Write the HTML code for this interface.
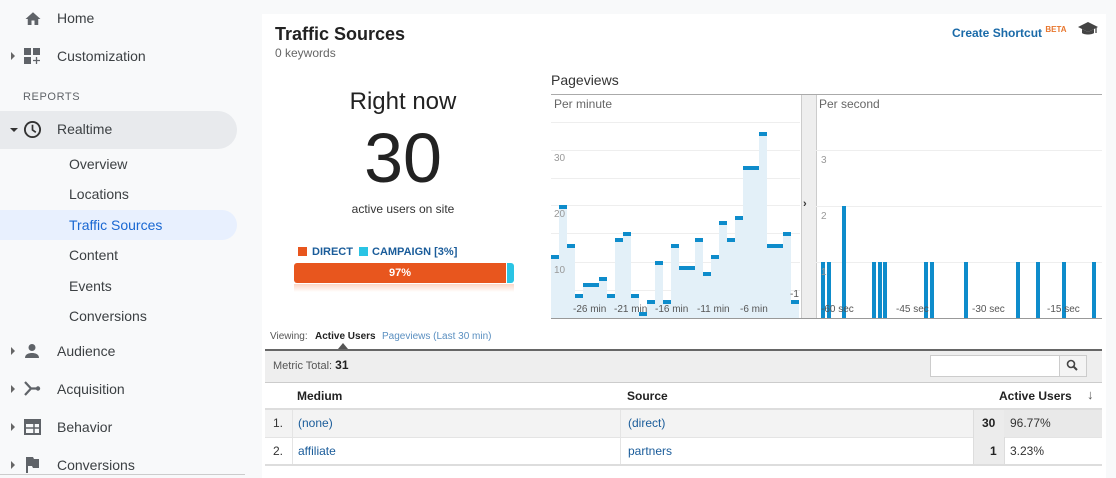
<!DOCTYPE html>
<html><head><meta charset="utf-8"><style>
body{margin:0;width:1116px;height:478px;overflow:hidden;background:#f8f9fa;font-family:"Liberation Sans",sans-serif;position:relative}
.a{position:absolute;white-space:nowrap}
.nav{font-size:14px;color:#3c4043}
.sub{font-size:14px;color:#3c4043;left:69px}
.tri{position:absolute;width:0;height:0;border-top:4px solid transparent;border-bottom:4px solid transparent;border-left:4px solid #666;left:11px}
svg{position:absolute}
</style></head><body>
<!-- sidebar -->
<svg style="left:24px;top:10px" width="18" height="18" viewBox="0 0 24 24"><path d="M10 20v-6h4v6h5v-8h3L12 3 2 12h3v8z" fill="#5f6368"/></svg>
<div class="a nav" style="left:57px;top:10px">Home</div>
<div class="tri" style="top:52px"></div>
<svg style="left:24px;top:48px" width="17" height="17" viewBox="0 0 17 17"><rect x="0" y="0" width="7" height="7" fill="#5f6368"/><rect x="9" y="0" width="7" height="7" fill="#5f6368"/><rect x="0" y="9" width="7" height="7" fill="#5f6368"/><path d="M12.5 9v7M9 12.5h7" stroke="#5f6368" stroke-width="1.3"/></svg>
<div class="a nav" style="left:57px;top:48px">Customization</div>
<div class="a" style="left:23px;top:91px;font-size:11px;letter-spacing:.6px;color:#5f6368">REPORTS</div>
<div class="a" style="left:0;top:111px;width:237px;height:38px;background:#e8eaed;border-radius:0 19px 19px 0"></div>
<div class="a" style="left:10px;top:128px;width:0;height:0;border-left:4px solid transparent;border-right:4px solid transparent;border-top:4px solid #333"></div>
<svg style="left:23px;top:120px" width="19" height="19" viewBox="0 0 20 20"><circle cx="10" cy="10" r="8" fill="none" stroke="#333" stroke-width="2"/><path d="M10 5v5.5l3.5 2.5" fill="none" stroke="#333" stroke-width="1.8"/></svg>
<div class="a nav" style="left:57px;top:121px">Realtime</div>
<div class="a sub" style="top:156px">Overview</div>
<div class="a sub" style="top:186px">Locations</div>
<div class="a" style="left:0;top:210px;width:237px;height:30px;background:#e8f0fe;border-radius:0 15px 15px 0"></div>
<div class="a sub" style="top:217px;color:#1967d2">Traffic Sources</div>
<div class="a sub" style="top:247px">Content</div>
<div class="a sub" style="top:278px">Events</div>
<div class="a sub" style="top:308px">Conversions</div>
<div class="tri" style="top:347px"></div>
<svg style="left:24px;top:343px" width="16" height="16" viewBox="0 0 16 16"><circle cx="8" cy="4.5" r="3.5" fill="#5f6368"/><path d="M1 15c0-4 4-5 7-5s7 1 7 5z" fill="#5f6368"/></svg>
<div class="a nav" style="left:57px;top:343px">Audience</div>
<div class="tri" style="top:385px"></div>
<svg style="left:24px;top:380px" width="17" height="17" viewBox="0 0 17 17"><path d="M1 2l6 6.5-6 6.5M7 8.5h6" fill="none" stroke="#5f6368" stroke-width="2.2"/><circle cx="14" cy="8.5" r="2.2" fill="#5f6368"/></svg>
<div class="a nav" style="left:57px;top:381px">Acquisition</div>
<div class="tri" style="top:423px"></div>
<svg style="left:24px;top:419px" width="17" height="16" viewBox="0 0 17 16"><rect x="1" y="1" width="15" height="14" fill="none" stroke="#5f6368" stroke-width="2"/><rect x="1" y="1" width="15" height="4" fill="#5f6368"/><path d="M1 9h15M10 5v10" stroke="#5f6368" stroke-width="1.5"/></svg>
<div class="a nav" style="left:57px;top:419px">Behavior</div>
<div class="tri" style="top:461px"></div>
<svg style="left:25px;top:457px" width="15" height="16" viewBox="0 0 15 16"><path d="M1 0v16h2v-7h4l1 2h6V2H9L8 0z" fill="#5f6368"/></svg>
<div class="a nav" style="left:57px;top:457px">Conversions</div>
<div class="a" style="left:0;top:474px;width:245px;height:1px;background:#ccc"></div>

<!-- main card -->
<div class="a" style="left:262px;top:14px;width:844px;height:464px;background:#fff"></div>
<div class="a" style="left:275px;top:24px;font-size:18px;font-weight:bold;color:#222">Traffic Sources</div>
<div class="a" style="left:275px;top:46px;font-size:12px;color:#666">0 keywords</div>
<div class="a" style="left:952px;top:25px;font-size:12px;font-weight:bold;color:#1a6aa8">Create Shortcut <sup style="font-size:8px;color:#e8762d">BETA</sup></div>
<svg style="left:1078px;top:22px" width="20" height="14" viewBox="0 0 20 14"><path d="M10 0L0 5l10 5 10-5z" fill="#444"/><path d="M4 7v4c2 2 10 2 12 0V7l-6 3z" fill="#444"/><path d="M18 5v6" stroke="#444" stroke-width="1.3"/></svg>

<div class="a" style="left:262px;top:88px;width:282px;text-align:center;font-size:24px;color:#222">Right now</div>
<div class="a" style="left:262px;top:118px;width:282px;text-align:center;font-size:70px;color:#222;line-height:80px">30</div>
<div class="a" style="left:262px;top:202px;width:282px;text-align:center;font-size:12px;color:#333">active users on site</div>
<div class="a" style="left:298px;top:247px;width:9px;height:9px;background:#e8561e"></div>
<div class="a" style="left:312px;top:246px;font-size:11px;font-weight:bold;color:#1a5c9a">DIRECT</div>
<div class="a" style="left:359px;top:247px;width:9px;height:9px;background:#2ac4e4"></div>
<div class="a" style="left:372px;top:246px;font-size:11px;font-weight:bold;color:#1a5c9a">CAMPAIGN [3%]</div>
<div class="a" style="left:294px;top:263px;width:212px;height:20px;background:#e8561e;border-radius:3px 0 0 3px;color:#fff;font-size:11px;font-weight:bold;text-align:center;line-height:20px">97%</div>
<div class="a" style="left:507px;top:263px;width:7px;height:20px;background:#2ac4e4;border-radius:0 3px 3px 0"></div>
<div class="a" style="left:294px;top:284px;width:220px;height:8px;background:linear-gradient(#fbd6c6,#fff)"></div>

<div class="a" style="left:551px;top:72px;font-size:14px;color:#333">Pageviews</div>
<div class="a" style="left:551px;top:94px;width:551px;height:1px;background:#aaa"></div>
<div class="a" style="left:801px;top:95px;width:14px;height:223px;background:#eee;border-left:1px solid #ccc;border-right:1px solid #ccc"></div>
<div class="a" style="left:803px;top:198px;font-size:11px;font-weight:bold;color:#333">›</div>
<div class="a" style="left:554px;top:97px;font-size:12px;color:#666">Per minute</div>
<div class="a" style="left:819px;top:97px;font-size:12px;color:#666">Per second</div>
<svg style="left:0;top:0" width="1116" height="478">
<g stroke="#eee" stroke-width="1"><line x1="551" x2="800" y1="122.5" y2="122.5"/><line x1="551" x2="800" y1="150.5" y2="150.5"/><line x1="551" x2="800" y1="178.5" y2="178.5"/><line x1="551" x2="800" y1="205.5" y2="205.5"/><line x1="551" x2="800" y1="233.5" y2="233.5"/><line x1="551" x2="800" y1="262.5" y2="262.5"/><line x1="551" x2="800" y1="290.5" y2="290.5"/>
<line x1="816" x2="1102" y1="150.5" y2="150.5"/><line x1="816" x2="1102" y1="206.5" y2="206.5"/><line x1="816" x2="1102" y1="262.5" y2="262.5"/></g>
<g id="pm"></g>
<g fill="#0e8ccb">
<rect x="821" y="262" width="4" height="56"/><rect x="827" y="262" width="4" height="56"/><rect x="842" y="206" width="4" height="112"/><rect x="872" y="262" width="4" height="56"/><rect x="878" y="262" width="4" height="56"/><rect x="883" y="262" width="4" height="56"/><rect x="924" y="262" width="4" height="56"/><rect x="930" y="262" width="4" height="56"/><rect x="964" y="262" width="4" height="56"/><rect x="1016" y="262" width="4" height="56"/><rect x="1036" y="262" width="4" height="56"/><rect x="1062" y="262" width="4" height="56"/><rect x="1092" y="262" width="4" height="56"/>
</g>
<g font-family="Liberation Sans" font-size="10" fill="#999"><text x="554" y="161">30</text><text x="554" y="217">20</text><text x="554" y="273">10</text><text x="821" y="163">3</text><text x="821" y="219">2</text><text x="821" y="275">1</text></g>
<g font-family="Liberation Sans" font-size="10" fill="#555"><text x="573" y="312">-26 min</text><text x="614" y="312">-21 min</text><text x="655" y="312">-16 min</text><text x="697" y="312">-11 min</text><text x="740" y="312">-6 min</text><text x="790" y="297">-1</text><text x="821" y="312">-60 sec</text><text x="896" y="312">-45 sec</text><text x="972" y="312">-30 sec</text><text x="1047" y="312">-15 sec</text></g>
<line x1="551" x2="1102" y1="318.5" y2="318.5" stroke="#999"/>
</svg>

<div class="a" style="left:270px;top:331px;font-size:10px;color:#555">Viewing:</div>
<div class="a" style="left:315px;top:331px;font-size:10px;font-weight:bold;color:#222">Active Users</div>
<div class="a" style="left:382px;top:331px;font-size:10px;color:#5a8fc0">Pageviews (Last 30 min)</div>
<div class="a" style="left:338px;top:343px;width:0;height:0;border-left:5px solid transparent;border-right:5px solid transparent;border-bottom:6px solid #555"></div>
<div class="a" style="left:265px;top:349px;width:837px;height:2px;background:#666"></div>
<div class="a" style="left:265px;top:351px;width:837px;height:31px;background:#eee;border-bottom:1px solid #ccc"></div>
<div class="a" style="left:273px;top:358px;font-size:11px;color:#555">Metric Total: <b style="color:#222;font-size:12px">31</b></div>
<div class="a" style="left:930px;top:355px;width:128px;height:20px;background:#fff;border:1px solid #ccc"></div>
<div class="a" style="left:1059px;top:355px;width:26px;height:20px;background:#f4f4f4;border:1px solid #ccc"></div>
<svg style="left:1066px;top:359px" width="12" height="12" viewBox="0 0 12 12"><circle cx="5" cy="5" r="3.5" fill="none" stroke="#444" stroke-width="1.6"/><path d="M7.5 7.5L11 11" stroke="#444" stroke-width="2"/></svg>
<div class="a" style="left:265px;top:383px;width:837px;height:25px;background:#fff;border-bottom:2px solid #ddd"></div>
<div class="a" style="left:297px;top:389px;font-size:12px;font-weight:bold;color:#222">Medium</div>
<div class="a" style="left:627px;top:389px;font-size:12px;font-weight:bold;color:#222">Source</div>
<div class="a" style="left:999px;top:389px;font-size:12px;font-weight:bold;color:#222">Active Users</div>
<div class="a" style="left:1087px;top:387px;font-size:13px;color:#555">↓</div>
<div class="a" style="left:265px;top:410px;width:837px;height:27px;background:#f3f3f3;border-bottom:1px solid #e4e4e4"></div>
<div class="a" style="left:265px;top:438px;width:837px;height:26px;background:#fff;border-bottom:2px solid #ddd"></div>
<div class="a" style="left:292px;top:410px;width:1px;height:54px;background:#e4e4e4"></div>
<div class="a" style="left:620px;top:410px;width:1px;height:54px;background:#e4e4e4"></div>
<div class="a" style="left:973px;top:410px;width:30px;height:54px;background:#ececec;border-left:1px solid #ddd;border-right:1px solid #ddd"></div>
<div class="a" style="left:1004px;top:410px;width:98px;height:27px;background:#e9e9e9"></div>
<div class="a" style="left:273px;top:416px;font-size:12px;color:#333">1.</div>
<div class="a" style="left:298px;top:416px;font-size:12px;color:#1a5c9a">(none)</div>
<div class="a" style="left:628px;top:416px;font-size:12px;color:#1a5c9a">(direct)</div>
<div class="a" style="left:982px;top:416px;font-size:12px;font-weight:bold;color:#222">30</div>
<div class="a" style="left:1010px;top:416px;font-size:12px;color:#333">96.77%</div>
<div class="a" style="left:273px;top:444px;font-size:12px;color:#333">2.</div>
<div class="a" style="left:298px;top:444px;font-size:12px;color:#1a5c9a">affiliate</div>
<div class="a" style="left:628px;top:444px;font-size:12px;color:#1a5c9a">partners</div>
<div class="a" style="left:990px;top:444px;font-size:12px;font-weight:bold;color:#222">1</div>
<div class="a" style="left:1010px;top:444px;font-size:12px;color:#333">3.23%</div>
<script>
var t=[256,206,245,295,284,284,278,295,239,233,295,313,301,262,301,245,267,267,239,273,256,222,239,217,167,167,133,245,245,233,301];
var g=document.getElementById('pm'),s='';
t.forEach(function(y,i){var x=551+i*8;s+='<rect x="'+x+'" y="'+y+'" width="8" height="'+(318-y)+'" fill="#e3f0f8"/><rect x="'+x+'" y="'+(y-1)+'" width="8" height="4" fill="#0e8ccb"/>';});
g.innerHTML=s;
</script>
</body></html>
